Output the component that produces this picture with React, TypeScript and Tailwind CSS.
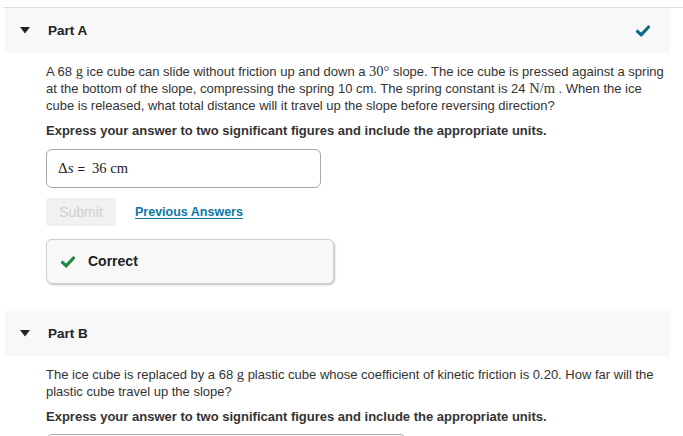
import React from 'react';

const Caret: React.FC = () => (
    <svg width="10" height="7" viewBox="0 0 10 7" className="shrink-0">
        <polygon points="0,0 10,0 5,6.5" fill="#222" />
    </svg>
);

const Check: React.FC<{ color: string; size?: number }> = ({ color, size = 14 }) => (
    <svg width={size} height={size} viewBox="0 0 14 14">
        <path d="M1.6 7.6 L5.2 10.8 L12.4 3.2" fill="none" stroke={color} strokeWidth="3.2" strokeLinecap="square" />
    </svg>
);

const PartHeader: React.FC<{ title: string; done?: boolean }> = ({ title, done }) => (
    <div className="flex items-center h-[45px] bg-[#f8f8f8] pl-[15px] pr-[20px]">
        <Caret />
        <span className="ml-[18px] mt-[2px] text-[13.5px] font-bold text-[#222]">{title}</span>
        <div className="flex-1" />
        {done && <Check color="#0f6b83" size={14} />}
    </div>
);

const m = "font-['Liberation_Serif',serif] text-[14.5px] leading-[14px]";

const App: React.FC = () => {
    return (
        <div className="w-[683px] h-[436px] overflow-hidden bg-white font-['Liberation_Sans',Arial,sans-serif] text-[#333]">
            <div className="pt-[7px]">
                <div className="ml-[3px] border-t border-[#dddddd]" />
                <div className="ml-[5px] w-[665px]">
                    {/* Part A */}
                    <PartHeader title="Part A" done />
                    <div className="pl-[41px] pr-[4px]">
                        <p className="mt-[10px] text-[13px] leading-[17px]">
                            A 68 <span className={m}>g</span> ice cube can slide without friction up and down a{' '}
                            <span className={m}>30°</span> slope. The ice cube is pressed against a spring at the bottom of
                            the slope, compressing the spring 10 cm. The spring constant is 24{' '}
                            <span className={m}>N/m</span> . When the ice cube is released, what total distance will it travel
                            up the slope before reversing direction?
                        </p>
                        <p className="mt-[8px] text-[13px] leading-[17px] font-bold">
                            Express your answer to two significant figures and include the appropriate units.
                        </p>

                        <div className="mt-[10px] w-[275px] h-[39px] border border-[#a8a8a8] rounded-[6px] flex items-center pl-[11px] text-[#222]">
                            <span className="font-['Liberation_Serif',serif] text-[15px]">Δ<i>s</i></span>
                            <span className="ml-[4px] text-[13px]">=</span>
                            <span className="font-['Liberation_Serif',serif] ml-[7px] text-[14.5px]">36 cm</span>
                        </div>

                        <div className="mt-[10px] flex items-center">
                            <button className="w-[70px] h-[28px] rounded-[3px] bg-[#f1f1f1] text-[14px] text-[#cfcfcf]">
                                Submit
                            </button>
                            <a className="ml-[19px] text-[12.5px] font-bold text-[#0d77a6] underline underline-offset-2">
                                Previous Answers
                            </a>
                        </div>

                        <div className="mt-[13px] w-[288px] h-[45px] rounded-[6px] border border-[#cfcfcf] bg-[#f8f8f8] shadow-[1px_1px_2px_rgba(0,0,0,0.25)] flex items-center pl-[14px]">
                            <Check color="#1e8a3c" size={14} />
                            <span className="ml-[13px] text-[14px] font-bold text-[#222]">Correct</span>
                        </div>
                    </div>

                    {/* Part B */}
                    <div className="mt-[27px]">
                        <PartHeader title="Part B" />
                    </div>
                    <div className="pl-[41px] pr-[4px]">
                        <p className="mt-[10px] text-[13px] leading-[17px]">
                            The ice cube is replaced by a 68 <span className={m}>g</span> plastic cube whose coefficient of
                            kinetic friction is 0.20. How far will the plastic cube travel up the slope?
                        </p>
                        <p className="mt-[8px] text-[13px] leading-[17px] font-bold">
                            Express your answer to two significant figures and include the appropriate units.
                        </p>
                        <div className="mt-[9px] w-[360px] h-[39px] border border-[#a8a8a8] rounded-[6px]" />
                    </div>
                </div>
            </div>
        </div>
    );
};

export default App;
